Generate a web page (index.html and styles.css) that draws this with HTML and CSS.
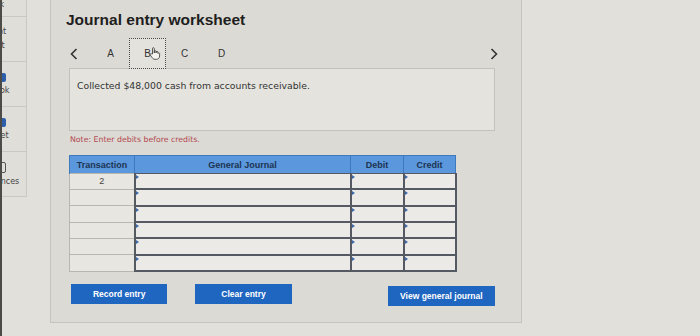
FILE: index.html
```html
<!DOCTYPE html>
<html>
<head>
  <link rel="stylesheet" href="styles.css">
</head>
<body>
<div class="page">
  <div class="sidebar">
    <div class="side-item top"><div class="inner"><span class="label">Ask</span></div></div>
    <div class="side-item"><div class="inner"><span class="label">Print</span><span class="label">Exit</span></div></div>
    <div class="side-item"><div class="inner"><span class="icon"></span><span class="label">eBook</span></div></div>
    <div class="side-item"><div class="inner"><span class="icon"></span><span class="label">Sheet</span></div></div>
    <div class="side-item"><div class="inner"><span class="icon outline"></span><span class="label">References</span></div></div>
  </div>

  <div class="panel">
    <h1 class="title">Journal entry worksheet</h1>

    <div class="tabs">
      <span class="arrow prev">
        <svg width="8" height="12" viewBox="0 0 8 12"><path d="M6.5 1 L1.5 6 L6.5 11" fill="none" stroke="#333" stroke-width="1.6"/></svg>
      </span>
      <span class="tab">A</span>
      <span class="tab current">B
        <svg class="cursor" width="12" height="13" viewBox="0 0 12 13"><path d="M3.5 7 V1.6 a0.9 0.9 0 0 1 1.8 0 V6 V4.6 a0.9 0.9 0 0 1 1.8 0 V6 V5.2 a0.9 0.9 0 0 1 1.8 0 V6.4 a0.9 0.9 0 0 1 1.7 0 V9 c0 2 -1.3 3.3 -3.2 3.3 H6 c-1.4 0 -2.2 -0.6 -3 -1.8 L1.2 7.9 a0.9 0.9 0 0 1 1.4 -1 Z" fill="#f4f3ef" stroke="#333" stroke-width="0.8"/></svg>
      </span>
      <span class="tab">C</span>
      <span class="tab">D</span>
      <span class="arrow next">
        <svg width="8" height="12" viewBox="0 0 8 12"><path d="M1.5 1 L6.5 6 L1.5 11" fill="none" stroke="#333" stroke-width="1.6"/></svg>
      </span>
    </div>

    <div class="desc">Collected $48,000 cash from accounts receivable.</div>

    <p class="note">Note: Enter debits before credits.</p>

    <table class="journal">
      <tr>
        <th class="c-trans">Transaction</th>
        <th class="c-gj">General Journal</th>
        <th class="c-debit">Debit</th>
        <th class="c-credit">Credit</th>
      </tr>
      <tr><td class="trans">2</td><td class="input"></td><td class="input"></td><td class="input"></td></tr>
      <tr><td class="trans"></td><td class="input"></td><td class="input"></td><td class="input"></td></tr>
      <tr><td class="trans"></td><td class="input"></td><td class="input"></td><td class="input"></td></tr>
      <tr><td class="trans"></td><td class="input"></td><td class="input"></td><td class="input"></td></tr>
      <tr><td class="trans"></td><td class="input"></td><td class="input"></td><td class="input"></td></tr>
      <tr><td class="trans"></td><td class="input"></td><td class="input"></td><td class="input"></td></tr>
    </table>

    <div class="actions">
      <button class="btn" type="button">Record entry</button>
      <button class="btn" type="button">Clear entry</button>
      <button class="btn wide" type="button">View general journal</button>
    </div>
  </div>
</div>
</body>
</html>
```

FILE: styles.css
```css
body {
    margin: 0;
    background-color: #e2e0db;
    font-family: "Liberation Sans", Arial, sans-serif;
    color: #222;
}
.page {
    display: flex;
    height: 336px;
    overflow: hidden;
}

/* left tool strip, mostly off the photo */
.sidebar {
    width: 46px;
    flex-shrink: 0;
    border-left: 2px solid #4d4b48;
    display: flex;
    flex-direction: column;
}
.side-item {
    width: 24px;
    height: 44px;
    border-right: 1px solid #cac8c3;
    border-bottom: 1px solid #cac8c3;
    background-color: #e0ded9;
    overflow: hidden;
    display: flex;
    align-items: center;
    font-family: "DejaVu Sans", sans-serif;
    font-size: 8px;
    color: #444;
}
.side-item.top { height: 16px; align-items: flex-start; }
.side-item .inner {
    width: 60px;
    margin-left: -35px;
    flex-shrink: 0;
    display: flex;
    flex-direction: column;
    align-items: center;
    gap: 4px;
}
.side-item .label { white-space: nowrap; line-height: 10px; }
.side-item .icon {
    width: 12px;
    height: 9px;
    margin-left: 6px;
    border-radius: 2px;
    background-color: #2d5fa8;
}
.side-item .icon.outline {
    background: none;
    border: 1px solid #555;
    width: 9px;
}

/* main worksheet panel */
.panel {
    width: 426px;
    height: 312px;
    margin-left: 2px;
    padding: 10px 26px 0 18px;
    background-color: #dcdad5;
    border: 1px solid #c6c4bf;
    border-top: none;
}
.title {
    margin: 0 0 0 -3px;
    font-size: 15.5px;
    line-height: 20px;
    font-weight: bold;
    color: #1e1e1e;
}

.tabs {
    display: flex;
    align-items: center;
    height: 31px;
    margin-top: 8px;
    position: relative;
    z-index: 1;
}
.arrow { display: flex; align-items: center; }
.arrow.prev { width: 22px; padding-left: 1px; }
.arrow.next { margin-left: auto; margin-right: -3px; }
.tab {
    width: 37px;
    height: 31px;
    box-sizing: border-box;
    display: flex;
    align-items: center;
    justify-content: center;
    font-size: 10px;
    color: #333;
    position: relative;
}
.tab.current {
    border: 1px dotted #4a4a4a;
    background-color: #e4e2dd;
}
.cursor {
    position: absolute;
    left: 19px;
    top: 8px;
}

.desc {
    height: 40px;
    margin-top: -1px;
    padding: 11px 7px 10px;
    background-color: #e5e3de;
    border: 1px solid #c3c1bc;
    font-family: "DejaVu Sans", sans-serif;
    font-size: 9.3px;
    line-height: 12px;
    color: #333;
}
.note {
    margin: 4px 0 10px 1px;
    font-family: "DejaVu Sans", sans-serif;
    font-size: 7.8px;
    line-height: 10px;
    color: #b24a50;
}

/* journal grid */
.journal {
    width: 382px;
    margin-left: 0;
    border-collapse: collapse;
    table-layout: fixed;
}
.journal th {
    height: 17px;
    padding: 0;
    background-color: #5a97dc;
    border-top: 1px solid #3f78bb;
    border-left: 1px solid #3f78bb;
    border-right: 1px solid #3f78bb;
    font-size: 9px;
    font-weight: bold;
    color: #1d3452;
}
.c-trans { width: 64px; }
.c-gj { width: 215px; }
.c-debit { width: 52px; }
.c-credit { width: 51px; }
.journal td {
    height: 14.35px;
    padding: 0;
    position: relative;
}
.trans {
    background-color: #e8e6e1;
    border: 1px solid #b8b6b1;
    text-align: center;
    font-size: 9px;
    color: #444;
}
.input {
    background-color: #ebeae6;
    border: 2px solid #555a62;
    border-top-width: 1px;
}
.input::before {
    content: "";
    position: absolute;
    left: 0;
    top: 1px;
    border-left: 3px solid #3c68a8;
    border-top: 2px solid transparent;
    border-bottom: 2px solid transparent;
}

.actions {
    display: flex;
    margin-top: 12px;
    padding-left: 2px;
}
.btn {
    width: 97px;
    height: 20px;
    border: none;
    background-color: #1f66c1;
    color: white;
    font-family: "Liberation Sans", Arial, sans-serif;
    font-size: 8.5px;
    font-weight: bold;
    margin-right: 28px;
    cursor: pointer;
}
.btn.wide {
    width: 108px;
    margin: 2px 0 0 68px;
}
```
